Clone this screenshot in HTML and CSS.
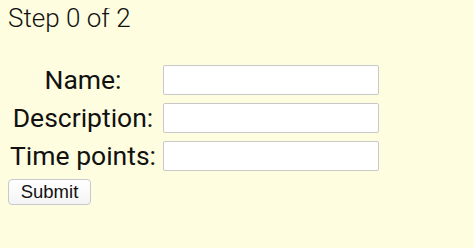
FILE: index.html
```html
<!DOCTYPE html>
<html>
<head>
<meta charset="utf-8">
<link rel="stylesheet" href="styles.css">
</head>
<body>
<div class="step">Step 0 of 2</div>
<form class="form">
  <div class="grid">
    <label class="label" for="name">Name:</label>
    <input class="field" id="name" type="text">
    <label class="label" for="desc">Description:</label>
    <input class="field" id="desc" type="text">
    <label class="label" for="tp">Time points:</label>
    <input class="field" id="tp" type="text">
  </div>
  <button class="submit" type="button">Submit</button>
</form>
</body>
</html>
```
FILE: styles.css
```css
html, body {
  background: #fefddf;
}
body {
  margin: 8px;
  font-family: Roboto, "Liberation Sans", sans-serif;
  color: #111;
}
.step {
  margin-top: -3px;
  font-size: 26px;
  font-weight: 300;
  line-height: 26px;
  height: 26px;
}
.form {
  margin-top: 34px;
}
.grid {
  display: grid;
  grid-template-columns: 150px 216px;
  column-gap: 5px;
  row-gap: 8px;
  align-items: center;
}
.label {
  font-size: 26.5px;
  text-align: center;
  line-height: 30px;
  white-space: nowrap;
}
.field {
  box-sizing: border-box;
  width: 216px;
  height: 30px;
  margin: 0;
  border: 1px solid #c8c8c8;
  border-radius: 2px;
  background: #fff;
}
.submit {
  display: block;
  margin-top: 8px;
  box-sizing: border-box;
  width: 83px;
  height: 26px;
  padding: 0;
  border: 1px solid #c9c9c9;
  border-radius: 4px;
  background: linear-gradient(#ffffff, #f4f4f4);
  font-family: "Liberation Sans", Arial, sans-serif;
  font-size: 18.5px;
  color: #111;
}
```
